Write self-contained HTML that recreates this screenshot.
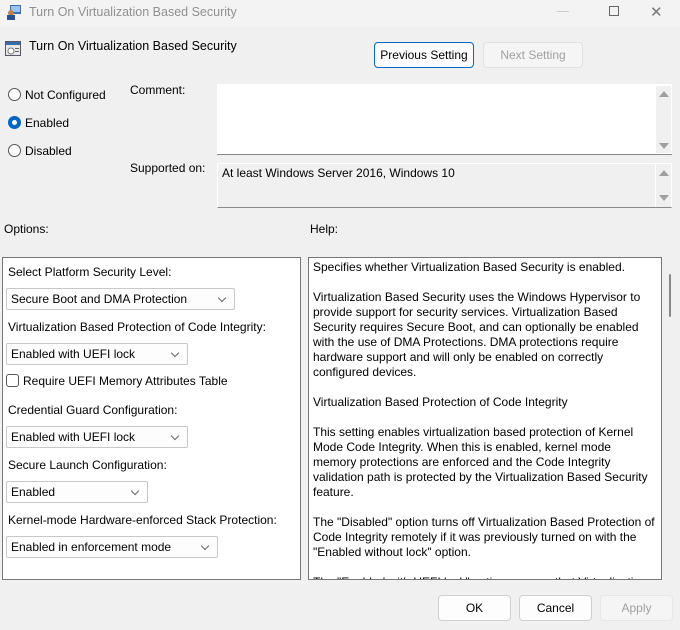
<!DOCTYPE html>
<html><head><style>
*{box-sizing:border-box;margin:0;padding:0}
body{width:680px;height:630px;background:#f0f0f0;font-family:"Liberation Sans",sans-serif;font-size:12px;color:#000;position:relative;overflow:hidden}
.a{position:absolute;white-space:nowrap}
.btn{position:absolute;height:26px;border:1px solid #d0d0d0;border-radius:4px;background:#fdfdfd;text-align:center;line-height:24px;font-size:12px}
.dd{position:absolute;height:22px;border:1px solid #c8c8c8;border-radius:2px;background:#fdfdfd;padding-left:4px;line-height:20px}
.dd:after{content:"";position:absolute;right:9px;top:6px;width:5px;height:5px;border-right:1px solid #666;border-bottom:1px solid #666;transform:rotate(45deg)}
.rad{position:absolute;width:13px;height:13px;border:1px solid #555;border-radius:50%;background:#fff}
.tri{position:absolute;width:0;height:0;border-left:5px solid transparent;border-right:5px solid transparent}
.help div{height:15px;line-height:15px}
</style></head><body>
<div class="a" style="left:0;top:0;width:680px;height:27px;background:#f3f3f3"></div>
<svg class="a" style="left:6px;top:4px" width="16" height="16"><rect x="4" y="1" width="11" height="9" fill="#3a6fb0"/><rect x="5" y="2" width="9" height="6" fill="#9cc4ee"/><circle cx="5" cy="9" r="3" fill="#c08050"/><rect x="1" y="11" width="8" height="5" fill="#2a4f8a"/></svg>
<div class="a" style="left:29px;top:5px;color:#909090;font-size:12.5px">Turn On Virtualization Based Security</div>
<div class="a" style="left:557px;top:11px;width:12px;border-top:1px solid #ccc"></div>
<div class="a" style="left:609px;top:6px;width:10px;height:10px;border:1px solid #666"></div>
<div class="a" style="left:650px;top:3px;font-size:15px;color:#777">✕</div>
<svg class="a" style="left:5px;top:40px" width="16" height="16"><rect x="0.5" y="1.5" width="15" height="14" fill="#e8e8e8" stroke="#556"/><rect x="1" y="2" width="14" height="3" fill="#3a6aa8"/><circle cx="6" cy="11" r="3" fill="#fff" stroke="#777"/><rect x="10" y="8" width="4" height="1" fill="#666"/><rect x="10" y="11" width="4" height="1" fill="#666"/></svg>
<div class="a" style="left:29px;top:39px;font-size:12.5px">Turn On Virtualization Based Security</div>
<div class="btn" style="left:374px;top:42px;width:100px;border:1px solid #0067c0">Previous Setting</div>
<div class="btn" style="left:483px;top:42px;width:100px;color:#a0a0a0;background:#f5f5f5;border-color:#e0e0e0">Next Setting</div>
<div class="rad" style="left:8px;top:88px"></div><div class="a" style="left:25px;top:88px">Not Configured</div>
<div class="rad" style="left:8px;top:116px;border:4px solid #0067c0"></div><div class="a" style="left:25px;top:116px">Enabled</div>
<div class="rad" style="left:8px;top:144px"></div><div class="a" style="left:25px;top:144px">Disabled</div>
<div class="a" style="left:130px;top:83px">Comment:</div>
<div class="a" style="left:217px;top:84px;width:455px;height:71px;background:#fff;border-bottom:1px solid #888"></div>
<div class="a" style="left:656px;top:86px;width:15px;height:67px;background:#f0f0f0"></div>
<div class="tri" style="left:659px;top:91px;border-bottom:6px solid #a0a0a0"></div>
<div class="tri" style="left:659px;top:143px;border-top:6px solid #a0a0a0"></div>
<div class="a" style="left:130px;top:161px">Supported on:</div>
<div class="a" style="left:217px;top:163px;width:455px;height:45px;border:1px solid #fff;border-bottom:1px solid #888;background:#f0f0f0"></div>
<div class="a" style="left:655px;top:164px;width:1px;height:43px;background:#fff"></div>
<div class="a" style="left:222px;top:166px">At least Windows Server 2016, Windows 10</div>
<div class="tri" style="left:659px;top:170px;border-bottom:6px solid #a0a0a0"></div>
<div class="tri" style="left:659px;top:195px;border-top:6px solid #a0a0a0"></div>
<div class="a" style="left:4px;top:222px">Options:</div>
<div class="a" style="left:310px;top:222px">Help:</div>
<div class="a" style="left:2px;top:257px;width:299px;height:323px;background:#fff;border:1px solid #777"></div>
<div class="a" style="left:8px;top:265px">Select Platform Security Level:</div>
<div class="dd" style="left:6px;top:288px;width:229px">Secure Boot and DMA Protection</div>
<div class="a" style="left:8px;top:320px">Virtualization Based Protection of Code Integrity:</div>
<div class="dd" style="left:6px;top:343px;width:182px">Enabled with UEFI lock</div>
<div class="a" style="left:6px;top:374px;width:13px;height:13px;border:1px solid #555;border-radius:3px"></div>
<div class="a" style="left:23px;top:374px">Require UEFI Memory Attributes Table</div>
<div class="a" style="left:8px;top:403px">Credential Guard Configuration:</div>
<div class="dd" style="left:6px;top:426px;width:182px">Enabled with UEFI lock</div>
<div class="a" style="left:8px;top:458px">Secure Launch Configuration:</div>
<div class="dd" style="left:6px;top:481px;width:142px">Enabled</div>
<div class="a" style="left:8px;top:513px">Kernel-mode Hardware-enforced Stack Protection:</div>
<div class="dd" style="left:6px;top:536px;width:212px">Enabled in enforcement mode</div>
<div class="a" style="left:308px;top:257px;width:354px;height:323px;background:#fff;border:1px solid #777;overflow:hidden">
<div class="help" style="position:absolute;left:4px;top:2px;white-space:nowrap">
<div>Specifies whether Virtualization Based Security is enabled.</div><div></div>
<div>Virtualization Based Security uses the Windows Hypervisor to</div>
<div>provide support for security services. Virtualization Based</div>
<div>Security requires Secure Boot, and can optionally be enabled</div>
<div>with the use of DMA Protections. DMA protections require</div>
<div>hardware support and will only be enabled on correctly</div>
<div>configured devices.</div><div></div>
<div>Virtualization Based Protection of Code Integrity</div><div></div>
<div>This setting enables virtualization based protection of Kernel</div>
<div>Mode Code Integrity. When this is enabled, kernel mode</div>
<div>memory protections are enforced and the Code Integrity</div>
<div>validation path is protected by the Virtualization Based Security</div>
<div>feature.</div><div></div>
<div>The "Disabled" option turns off Virtualization Based Protection of</div>
<div>Code Integrity remotely if it was previously turned on with the</div>
<div>"Enabled without lock" option.</div><div></div>
<div>The "Enabled with UEFI lock" option ensures that Virtualization</div>
</div></div>
<div class="a" style="left:669px;top:274px;width:2px;height:43px;background:#888;border-radius:1px"></div>
<div class="btn" style="left:438px;top:595px;width:73px">OK</div>
<div class="btn" style="left:519px;top:595px;width:73px">Cancel</div>
<div class="btn" style="left:600px;top:595px;width:73px;color:#a0a0a0;background:#f5f5f5;border-color:#e6e6e6">Apply</div>
</body></html>
